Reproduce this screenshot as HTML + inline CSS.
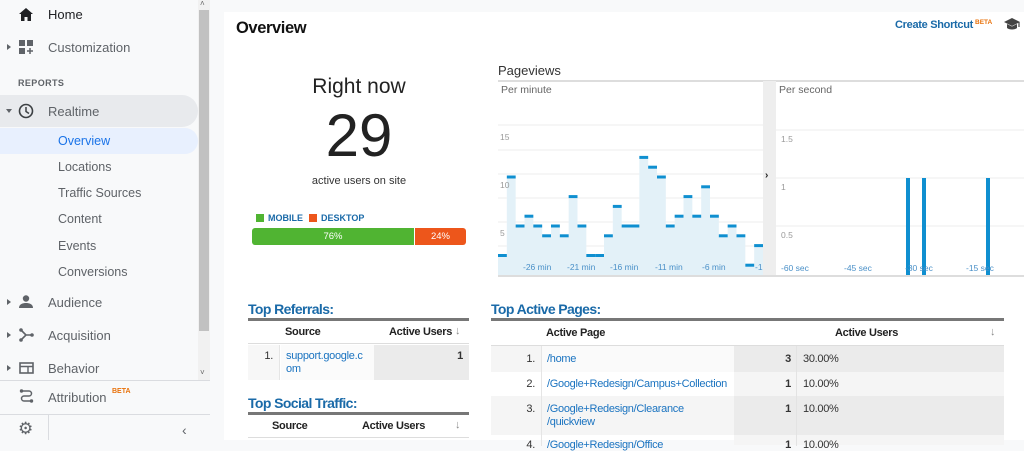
<!DOCTYPE html>
<html><head><meta charset="utf-8"><style>
*{margin:0;padding:0;box-sizing:border-box}
body{width:1024px;height:440px;overflow:hidden;background:#f8f9fa;font-family:"Liberation Sans",sans-serif;position:relative;color:#333}
.a{position:absolute}
.nav{font-size:13px;color:#5f6368}
.sub{font-size:12.5px;color:#5f6368;left:58px}
.h{font-weight:bold;color:#1a6aa8;font-size:14px;letter-spacing:-0.6px}
.tbl{border-top:3px solid #777;font-size:11px;letter-spacing:-0.3px}
.lk{color:#1a73c0}
.ax{font-size:8.5px;color:#4a90c8}
.gl{font-size:8.5px;color:#999}
</style></head><body>
<!-- sidebar -->
<div class="a" style="left:0;top:0;width:198px;height:440px;background:#f8f9fa"></div>
<div class="a" style="left:0;top:95px;width:198px;height:32px;background:#e8eaed;border-radius:0 16px 16px 0"></div>
<div class="a" style="left:0;top:128px;width:198px;height:26px;background:#e8f0fe;border-radius:0 13px 13px 0"></div>
<svg class="a" style="left:18px;top:7px" width="16" height="15" viewBox="0 0 16 15"><path d="M8 1 L1 7 H3 V14 H6.5 V10 H9.5 V14 H13 V7 H15Z" fill="#202124"/></svg>
<div class="a nav" style="left:48px;top:7px;color:#202124">Home</div>
<div class="a" style="left:7px;top:44px;border-left:4px solid #5f6368;border-top:3px solid transparent;border-bottom:3px solid transparent"></div>
<svg class="a" style="left:19px;top:40px" width="14" height="14"><rect x="0" y="0" width="6" height="6" fill="#5f6368"/><rect x="8" y="0" width="6" height="6" fill="#5f6368"/><rect x="0" y="8" width="6" height="6" fill="#5f6368"/><path d="M11 8v6M8 11h6" stroke="#5f6368" stroke-width="1.5"/></svg>
<div class="a nav" style="left:48px;top:40px">Customization</div>
<div class="a" style="left:18px;top:78px;font-size:9px;color:#5f6368;font-weight:bold;letter-spacing:.4px">REPORTS</div>
<div class="a" style="left:6px;top:109px;border-top:4px solid #5f6368;border-left:3px solid transparent;border-right:3px solid transparent"></div>
<svg class="a" style="left:18px;top:103px" width="16" height="16"><circle cx="8" cy="8" r="6.5" fill="none" stroke="#3c4043" stroke-width="1.6"/><path d="M8 4v4.5l3 2" fill="none" stroke="#3c4043" stroke-width="1.5"/></svg>
<div class="a nav" style="left:48px;top:104px">Realtime</div>
<div class="a sub" style="top:134px;color:#1a73e8">Overview</div>
<div class="a sub" style="top:160px">Locations</div>
<div class="a sub" style="top:186px">Traffic Sources</div>
<div class="a sub" style="top:212px">Content</div>
<div class="a sub" style="top:239px">Events</div>
<div class="a sub" style="top:265px">Conversions</div>
<div class="a" style="left:7px;top:299px;border-left:4px solid #5f6368;border-top:3px solid transparent;border-bottom:3px solid transparent"></div>
<svg class="a" style="left:19px;top:295px" width="14" height="13"><circle cx="7" cy="3.5" r="3.2" fill="#5f6368"/><path d="M0 13c0-4 4-5 7-5s7 1 7 5z" fill="#5f6368"/></svg>
<div class="a nav" style="left:48px;top:295px">Audience</div>
<div class="a" style="left:7px;top:332px;border-left:4px solid #5f6368;border-top:3px solid transparent;border-bottom:3px solid transparent"></div>
<svg class="a" style="left:19px;top:328px" width="15" height="14"><path d="M2 2l5 5-5 5M7 7h6" fill="none" stroke="#5f6368" stroke-width="1.6"/><circle cx="2" cy="2" r="1.8" fill="#5f6368"/><circle cx="2" cy="12" r="1.8" fill="#5f6368"/><circle cx="13" cy="7" r="1.8" fill="#5f6368"/></svg>
<div class="a nav" style="left:48px;top:328px">Acquisition</div>
<div class="a" style="left:7px;top:365px;border-left:4px solid #5f6368;border-top:3px solid transparent;border-bottom:3px solid transparent"></div>
<svg class="a" style="left:19px;top:362px" width="15" height="12"><rect x="1" y="1" width="13" height="10" fill="none" stroke="#5f6368" stroke-width="1.6"/><path d="M1 4.5h13M9 4.5v6" stroke="#5f6368" stroke-width="1.4"/></svg>
<div class="a nav" style="left:48px;top:361px">Behavior</div>
<div class="a" style="left:0;top:380px;width:210px;border-top:1px solid #dadce0"></div>
<svg class="a" style="left:19px;top:389px" width="15" height="15"><path d="M3 2h7a2.5 2.5 0 010 5H5a2.5 2.5 0 000 5h7" fill="none" stroke="#5f6368" stroke-width="1.5"/><circle cx="2.5" cy="2" r="1.7" fill="#5f6368"/><circle cx="12.5" cy="12" r="1.7" fill="#5f6368"/></svg>
<div class="a nav" style="left:48px;top:390px">Attribution</div>
<div class="a" style="left:112px;top:388px;font-size:7px;font-weight:bold;color:#e8710a">BETA</div>
<div class="a" style="left:0;top:414px;width:210px;border-top:1px solid #dadce0"></div>
<div class="a" style="left:48px;top:415px;height:25px;border-left:1px solid #dadce0"></div>
<div class="a" style="left:18px;top:420px;font-size:17px;color:#5f6368;line-height:17px">⚙</div>
<div class="a" style="left:182px;top:422px;font-size:14px;color:#5f6368">‹</div>
<!-- scrollbar -->
<div class="a" style="left:198px;top:0;width:12px;height:380px;background:#f1f1f1"></div>
<div class="a" style="left:199px;top:10px;width:10px;height:321px;background:#c1c1c1"></div>
<div class="a" style="left:200px;top:-1px;font-size:8px;color:#666">˄</div>
<div class="a" style="left:200px;top:368px;font-size:8px;color:#666">˅</div>
<!-- main panel -->
<div class="a" style="left:224px;top:12px;width:800px;height:428px;background:#fff"></div>
<div class="a" style="left:236px;top:19px;font-size:16.5px;font-weight:bold;color:#111;letter-spacing:-0.4px">Overview</div>
<div class="a" style="left:895px;top:19px;font-size:11px;font-weight:bold;color:#1a6aa8;letter-spacing:-0.3px">Create Shortcut</div>
<div class="a" style="left:975px;top:19px;font-size:6.5px;font-weight:bold;color:#e8710a">BETA</div>
<svg class="a" style="left:1003px;top:17px" width="18" height="14"><path d="M9 1L1 5l8 4 8-4z M4 7v4c2 2 8 2 10 0V7L9 9.5z" fill="#444"/><path d="M16 5v5" stroke="#444" stroke-width="1.2"/></svg>
<!-- right now -->
<div class="a" style="left:252px;top:75px;width:214px;text-align:center;font-size:21px;color:#222">Right now</div>
<div class="a" style="left:252px;top:103px;width:214px;text-align:center;font-size:60px;color:#222;line-height:66px">29</div>
<div class="a" style="left:252px;top:175px;width:214px;text-align:center;font-size:11px;color:#333">active users on site</div>
<div class="a" style="left:256px;top:214px;width:8px;height:8px;background:#50b432"></div>
<div class="a" style="left:268px;top:213px;font-size:9px;font-weight:bold;color:#1a6aa8">MOBILE</div>
<div class="a" style="left:309px;top:214px;width:8px;height:8px;background:#ed561b"></div>
<div class="a" style="left:321px;top:213px;font-size:9px;font-weight:bold;color:#1a6aa8">DESKTOP</div>
<div class="a" style="left:252px;top:228px;width:162px;height:17px;background:#50b432;border-radius:3px 0 0 3px;color:#fff;font-size:9.5px;text-align:center;line-height:17px">76%</div>
<div class="a" style="left:415px;top:228px;width:51px;height:17px;background:#ed561b;border-radius:0 3px 3px 0;color:#fff;font-size:9.5px;text-align:center;line-height:17px">24%</div>
<!-- pageviews -->
<div class="a" style="left:498px;top:63px;font-size:13px;color:#333">Pageviews</div>
<div class="a" style="left:498px;top:80px;width:526px;border-top:2px solid #ddd"></div>
<div class="a" style="left:501px;top:84px;font-size:10.5px;color:#666">Per minute</div>
<div class="a" style="left:763px;top:81px;width:13px;height:194px;background:#eee"></div>
<div class="a" style="left:765px;top:170px;font-size:10px;font-weight:bold;color:#222">›</div>
<div class="a" style="left:779px;top:84px;font-size:10.5px;color:#666">Per second</div>
<svg class="a" style="left:498px;top:80px" width="265" height="195" viewBox="0 0 30 195" preserveAspectRatio="none">
<g stroke="#eee" stroke-width="1" vector-effect="non-scaling-stroke"><path d="M0 45H30M0 70H30M0 94H30M0 118H30M0 142H30M0 166H30" vector-effect="non-scaling-stroke"/></g>
<path d="M0 195V175.4H1V97H2V146H3V136.2H4V146H5V155.8H6V146H7V155.8H8V116.6H9V146H10V175.4H12V155.8H13V126.4H14V146H16V77.4H17V87.2H18V97H19V146H20V136.2H21V116.6H22V136.2H23V106.8H24V136.2H25V155.8H26V146H27V155.8H28V185.2H29V165.6H30V195Z" fill="#e3f1f8"/>
<g fill="#0f8fd0">
<rect x="0" y="174" width="1" height="3"/><rect x="1" y="95.5" width="1" height="3"/><rect x="2" y="144.5" width="1" height="3"/><rect x="3" y="134.7" width="1" height="3"/><rect x="4" y="144.5" width="1" height="3"/><rect x="5" y="154.3" width="1" height="3"/><rect x="6" y="144.5" width="1" height="3"/><rect x="7" y="154.3" width="1" height="3"/><rect x="8" y="115.1" width="1" height="3"/><rect x="9" y="144.5" width="1" height="3"/><rect x="10" y="174" width="1" height="3"/><rect x="11" y="174" width="1" height="3"/><rect x="12" y="154.3" width="1" height="3"/><rect x="13" y="124.9" width="1" height="3"/><rect x="14" y="144.5" width="1" height="3"/><rect x="15" y="144.5" width="1" height="3"/><rect x="16" y="75.9" width="1" height="3"/><rect x="17" y="85.7" width="1" height="3"/><rect x="18" y="95.5" width="1" height="3"/><rect x="19" y="144.5" width="1" height="3"/><rect x="20" y="134.7" width="1" height="3"/><rect x="21" y="115.1" width="1" height="3"/><rect x="22" y="134.7" width="1" height="3"/><rect x="23" y="105.3" width="1" height="3"/><rect x="24" y="134.7" width="1" height="3"/><rect x="25" y="154.3" width="1" height="3"/><rect x="26" y="144.5" width="1" height="3"/><rect x="27" y="154.3" width="1" height="3"/><rect x="28" y="183.7" width="1" height="3"/><rect x="29" y="164.1" width="1" height="3"/>
</g></svg>
<div class="a gl" style="left:500px;top:132px">15</div>
<div class="a gl" style="left:500px;top:180px">10</div>
<div class="a gl" style="left:500px;top:228px">5</div>
<div class="a ax" style="left:523px;top:262px">-26 min</div>
<div class="a ax" style="left:567px;top:262px">-21 min</div>
<div class="a ax" style="left:610px;top:262px">-16 min</div>
<div class="a ax" style="left:655px;top:262px">-11 min</div>
<div class="a ax" style="left:702px;top:262px">-6 min</div>
<div class="a ax" style="left:755px;top:262px">-1</div>
<svg class="a" style="left:776px;top:80px" width="248" height="195">
<path d="M0 50H248M0 98H248M0 146H248" stroke="#eee"/>
<rect x="130" y="98" width="4" height="97" fill="#0f8fd0"/><rect x="146" y="98" width="4" height="97" fill="#0f8fd0"/><rect x="210" y="98" width="4" height="97" fill="#0f8fd0"/>
</svg>
<div class="a gl" style="left:781px;top:134px">1.5</div>
<div class="a gl" style="left:781px;top:182px">1</div>
<div class="a gl" style="left:781px;top:230px">0.5</div>
<div class="a ax" style="left:781px;top:263px">-60 sec</div>
<div class="a ax" style="left:844px;top:263px">-45 sec</div>
<div class="a ax" style="left:905px;top:263px">-30 sec</div>
<div class="a ax" style="left:966px;top:263px">-15 sec</div>
<div class="a" style="left:498px;top:275px;width:526px;border-top:2px solid #ddd"></div>
<!-- top referrals -->
<div class="a h" style="left:248px;top:301px">Top Referrals:</div>
<div class="a tbl" style="left:248px;top:318px;width:221px;height:61px">
 <div class="a" style="left:0;top:0;width:221px;height:23px;border-bottom:1px solid #ddd;font-weight:bold;color:#222">
  <span class="a" style="left:37px;top:5px">Source</span><span class="a" style="left:141px;top:5px">Active Users</span><span class="a" style="left:207px;top:4px;color:#888">↓</span></div>
 <div class="a" style="left:0;top:24px;width:32px;height:35px;background:#f7f7f7;border-right:1px solid #e5e5e5;text-align:right;padding:5px 6px 0 0">1.</div>
 <div class="a lk" style="left:33px;top:24px;width:93px;height:35px;background:#fbfbfb;padding:5px 0 0 5px;line-height:13px">support.google.c om</div>
 <div class="a" style="left:126px;top:24px;width:95px;height:35px;background:#ebebeb;text-align:right;padding:5px 6px 0 0;font-weight:bold">1</div>
</div>
<div class="a h" style="left:248px;top:395px">Top Social Traffic:</div>
<div class="a tbl" style="left:248px;top:412px;width:221px;height:28px">
 <div class="a" style="left:0;top:0;width:221px;height:23px;border-bottom:1px solid #ddd;font-weight:bold;color:#222">
  <span class="a" style="left:24px;top:5px">Source</span><span class="a" style="left:114px;top:5px">Active Users</span><span class="a" style="left:207px;top:4px;color:#888">↓</span></div>
</div>
<!-- top active pages -->
<div class="a h" style="left:491px;top:301px">Top Active Pages:</div>
<div class="a tbl" style="left:491px;top:318px;width:513px;height:122px">
 <div class="a" style="left:0;top:0;width:513px;height:25px;border-bottom:1px solid #ddd;font-weight:bold;color:#222">
  <span class="a" style="left:55px;top:6px">Active Page</span><span class="a" style="left:344px;top:6px">Active Users</span><span class="a" style="left:499px;top:5px;color:#888">↓</span></div>
 <div class="a" style="left:0;top:25px;width:513px;height:26px;background:#f5f5f5"></div>
 <div class="a" style="left:50px;top:25px;width:193px;height:26px;background:#fafafa"></div>
 <div class="a" style="left:243px;top:25px;width:270px;height:26px;background:#ebebeb"></div>
 <div class="a" style="left:243px;top:51px;width:270px;height:24px;background:#f5f5f5"></div>
 <div class="a" style="left:0;top:75px;width:513px;height:39px;background:#f5f5f5"></div>
 <div class="a" style="left:243px;top:75px;width:270px;height:39px;background:#ebebeb"></div>
 <div class="a" style="left:243px;top:114px;width:270px;height:10px;background:#f5f5f5"></div>
 <div class="a" style="left:50px;top:25px;height:100px;border-left:1px solid #e5e5e5"></div>
 <div class="a" style="left:243px;top:25px;width:63px;height:100px;border-right:1px solid #e3e3e3"></div>
 <div class="a" style="left:0;top:32px;width:44px;text-align:right">1.</div><div class="a lk" style="left:56px;top:32px">/home</div><div class="a" style="left:243px;top:32px;width:57px;text-align:right;font-weight:bold">3</div><div class="a" style="left:312px;top:32px">30.00%</div>
 <div class="a" style="left:0;top:57px;width:44px;text-align:right">2.</div><div class="a lk" style="left:56px;top:57px">/Google+Redesign/Campus+Collection</div><div class="a" style="left:243px;top:57px;width:57px;text-align:right;font-weight:bold">1</div><div class="a" style="left:312px;top:57px">10.00%</div>
 <div class="a" style="left:0;top:82px;width:44px;text-align:right">3.</div><div class="a lk" style="left:56px;top:82px;line-height:13px">/Google+Redesign/Clearance<br>/quickview</div><div class="a" style="left:243px;top:82px;width:57px;text-align:right;font-weight:bold">1</div><div class="a" style="left:312px;top:82px">10.00%</div>
 <div class="a" style="left:0;top:118px;width:44px;text-align:right">4.</div><div class="a lk" style="left:56px;top:118px">/Google+Redesign/Office</div><div class="a" style="left:243px;top:118px;width:57px;text-align:right;font-weight:bold">1</div><div class="a" style="left:312px;top:118px">10.00%</div>
</div>
</body></html>
